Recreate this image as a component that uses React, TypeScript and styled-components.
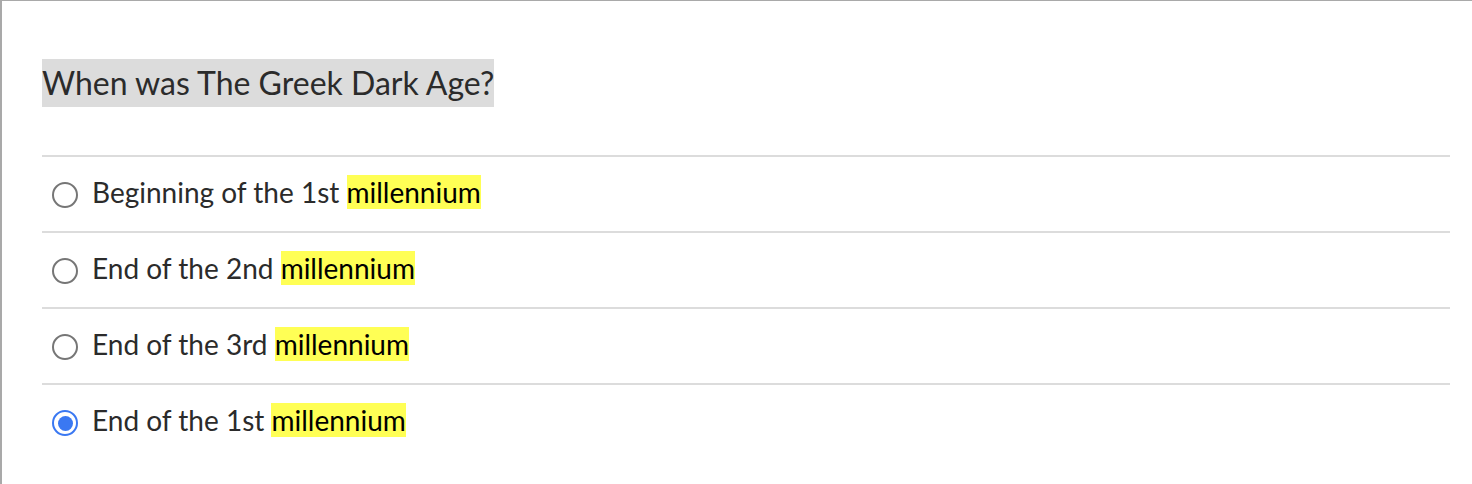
import React from "react";
import styled, { createGlobalStyle } from "styled-components";

const Global = createGlobalStyle`
  html, body { margin: 0; padding: 0; background: #fff; }
  body { font-family: Lato, "Noto Sans", sans-serif; }
`;

const Frame = styled.div`
  box-sizing: border-box;
  width: 1472px;
  height: 484px;
  border-top: 1px solid #a9a9a9;
  border-left: 2px solid #a9a9a9;
  padding: 58px 22px 0 40px;
`;

const Question = styled.div`
  display: inline-block;
  background: #dcdcdc;
  color: #2b2b2b;
  font-size: 32px;
  line-height: 48px;
`;

const List = styled.div`
  margin-top: 48px;
  display: flex;
  flex-direction: column;
`;

const Row = styled.label`
  display: flex;
  align-items: center;
  gap: 14px;
  height: 74px;
  border-top: 2px solid #dcdcdc;
  padding-left: 10px;
  color: #2b2b2b;
  font-size: 28px;
`;

const Label = styled.span`
  margin-top: -4px;
`;

const Radio = styled.span<{ $checked?: boolean }>`
  box-sizing: border-box;
  flex: none;
  width: 26px;
  height: 26px;
  border-radius: 50%;
  border: ${(p) => (p.$checked ? "2.5px solid #3a78f2" : "2px solid #767676")};
  display: flex;
  align-items: center;
  justify-content: center;
  margin-top: 2px;
  &::after {
    content: "";
    display: ${(p) => (p.$checked ? "block" : "none")};
    width: 15px;
    height: 15px;
    border-radius: 50%;
    background: #3a78f2;
  }
`;

const Mark = styled.span`
  background: #ffff55;
  color: #000;
`;

const options = [
  { text: "Beginning of the 1st", checked: false },
  { text: "End of the 2nd", checked: false },
  { text: "End of the 3rd", checked: false },
  { text: "End of the 1st", checked: true },
];

export default function App() {
  return (
    <>
      <Global />
      <Frame>
        <Question>When was The Greek Dark Age?</Question>
        <List>
          {options.map((o) => (
            <Row key={o.text}>
              <Radio $checked={o.checked} />
              <Label>
                {o.text} <Mark>millennium</Mark>
              </Label>
            </Row>
          ))}
        </List>
      </Frame>
    </>
  );
}
